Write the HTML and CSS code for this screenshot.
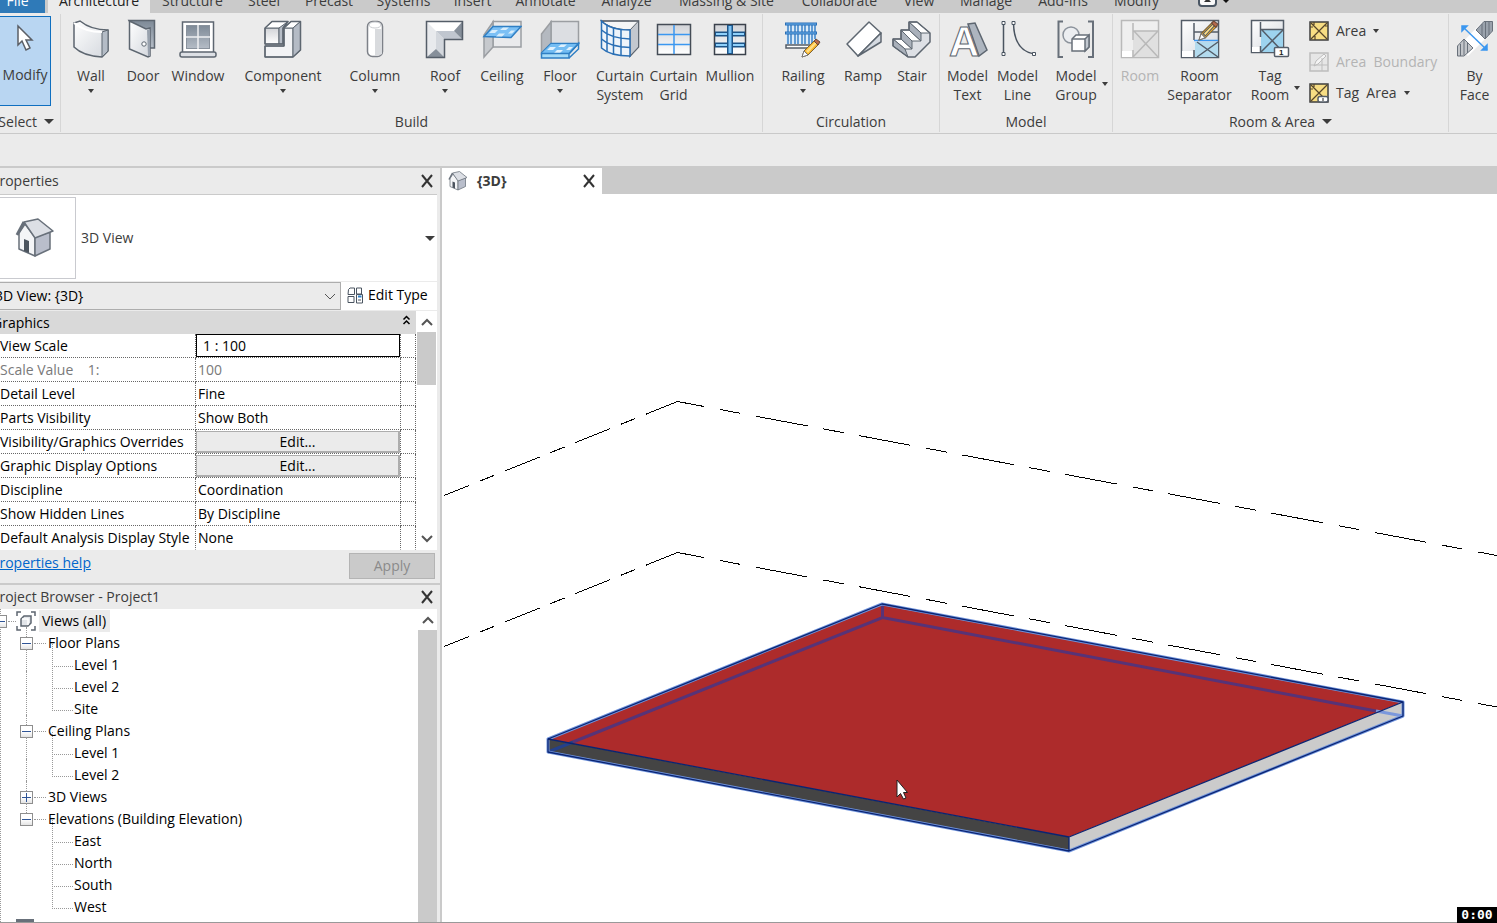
FILE: index.html
```
<!DOCTYPE html>
<html lang="en">
<head>
  <meta charset="UTF-8">
  <meta name="viewport" content="width=device-width, initial-scale=1.0">
  <title>Project1 - 3D View: {3D}</title>
  <link rel="stylesheet" href="styles.css">
</head>
<body>

<!-- gradients and symbols shared by the icons -->
<svg class="defs" width="0" height="0" aria-hidden="true">
  <defs>
    <linearGradient id="metal" x1="0" y1="0" x2="1" y2="1">
      <stop offset="0" stop-color="#ffffff"/>
      <stop offset="1" stop-color="#d3d7dd"/>
    </linearGradient>
    <linearGradient id="face" x1="0" y1="0" x2="0" y2="1">
      <stop offset="0" stop-color="#d2d4d8"/>
      <stop offset="1" stop-color="#ffffff"/>
    </linearGradient>
    <linearGradient id="glass" x1="0" y1="0" x2="0" y2="1">
      <stop offset="0" stop-color="#7e8a97"/>
      <stop offset="1" stop-color="#b4bcc6"/>
    </linearGradient>
    <symbol id="house" viewBox="0 0 40 40">
      <g stroke="#68707a" stroke-width="1.500" stroke-linejoin="round">
        <path d="M4 15 10 6 20 19V38L4 31Z" fill="#f4f5f7"/>
        <path d="M20 19 35 14V31L20 38Z" fill="#b9becb"/>
        <path d="M9 4 23 1 38 13 20 20Z" fill="#dcdfe5"/>
        <path d="M2 17 9 4" stroke-width="3"/>
      </g>
      <path d="M9 21 14 23V35L9 33Z" fill="#4c545e"/>
    </symbol>
    <symbol id="pencil" viewBox="0 0 20 20">
      <path d="M1 19 3 13 14 2 18 6 7 17Z" fill="#f7b32b" stroke="#7b6238"/>
      <path d="M5 13 15 3 17 4 7 15Z" fill="#ffdf85"/>
      <path d="M13 3 15 1 19 4 17 7Z" fill="#b86a4b" stroke="#6a4a3c"/>
      <path d="M1 19 3 13 7 17Z" fill="#fff" stroke="#777"/>
    </symbol>
  </defs>
</svg>

<nav class="tabs">
  <a class="tab file" href="#">File</a>
  <a class="tab active" href="#">Architecture</a>
  <a class="tab" href="#">Structure</a>
  <a class="tab" href="#">Steel</a>
  <a class="tab" href="#">Precast</a>
  <a class="tab" href="#">Systems</a>
  <a class="tab" href="#">Insert</a>
  <a class="tab" href="#">Annotate</a>
  <a class="tab" href="#">Analyze</a>
  <a class="tab" href="#">Massing &amp; Site</a>
  <a class="tab" href="#">Collaborate</a>
  <a class="tab" href="#">View</a>
  <a class="tab" href="#">Manage</a>
  <a class="tab" href="#">Add-Ins</a>
  <a class="tab" href="#">Modify</a>
  <button class="minimize" aria-label="Minimize ribbon">
    <svg width="34" height="14" viewBox="0 0 34 14"><rect x="2" y="-6" width="17" height="13" rx="3" fill="#fafafa" stroke="#4a5663" stroke-width="2"/><path d="M7 3H14L10.500-1Z" fill="#333"/><path d="M25 0H33L29 4Z" fill="#111"/></svg>
  </button>
</nav>

<header class="ribbon">
  <section class="panel select">
    <div class="tools">
      <button class="tool pressed">
        <svg viewBox="0 0 40 40"><path d="M13 8V27L17 23 21 32 25 30 21 22H27Z" fill="#fff" stroke="#5b5f66" stroke-width="1.500"/></svg>
        <span>Modify</span>
      </button>
    </div>
    <h2>Select <i class="caret big"></i></h2>
  </section>

  <section class="panel build">
    <div class="tools">
      <button class="tool">
        <svg viewBox="0 0 40 40"><path d="M3 4 9 2Q20 11 37 11V32L31 38Q12 37 3 28Z" fill="url(#metal)" stroke="#5d6670" stroke-width="1.500"/><path d="M31 13 37 11V32L31 38Z" fill="#b4bcc6" stroke="#5d6670"/><path d="M3 4Q14 13 31 13" fill="none" stroke="#fff" stroke-width="2"/></svg>
        <span>Wall</span><i class="caret"></i>
      </button>
      <button class="tool">
        <svg viewBox="0 0 40 40"><path d="M6 1.500H31.500V29H24Z" fill="url(#glass)" stroke="#5d6670" stroke-width="1.500"/><path d="M6.500 2 23 10 27 9V37L25 38 6.500 30Z" fill="url(#metal)" stroke="#5d6670" stroke-width="1.500"/><path d="M24 11 27 10V37L25 37Z" fill="#98a1ad"/><circle cx="21" cy="25" r="2.200" fill="#fff" stroke="#5d6670"/></svg>
        <span>Door</span>
      </button>
      <button class="tool">
        <svg viewBox="0 0 40 40"><rect x="4.500" y="3" width="31" height="31" fill="#fff" stroke="#5d6670" stroke-width="1.500"/><rect x="8.500" y="6.500" width="23" height="23" fill="url(#glass)" stroke="#89929d"/><path d="M20 6V30M8 18H32" stroke="#eef0f2" stroke-width="1.500"/><rect x="2" y="33" width="36" height="5" rx="2" fill="#dde0e5" stroke="#5d6670" stroke-width="1.500"/></svg>
        <span>Window</span>
      </button>
      <button class="tool">
        <svg viewBox="0 0 40 40" stroke="#5d6670" stroke-linejoin="round"><path d="M2 27H21V9H30V38H2Z" fill="#f2f3f5"/><path d="M21 9 28 2.500H37.500L30 9Z" fill="#fff"/><path d="M30 9 37.500 2.500V31L30 38Z" fill="#b4bbc5"/><path d="M2 9H16V25H2Z" fill="url(#face)"/><path d="M2 9 9 2.500H25L18 9Z" fill="#fff"/><path d="M16 9 25 2.500 20 9V25H16Z" fill="#b6bdc7"/><path d="M2 9 9 2.500H25L20 9V25H2ZM21 9 28 2.500H37.500V31L30 38H2V27H21Z" fill="none" stroke-width="1.500"/></svg>
        <span>Component</span><i class="caret"></i>
      </button>
      <button class="tool">
        <svg viewBox="0 0 40 40"><rect x="12.500" y="2.500" width="15" height="35" rx="5" fill="#fff" stroke="#7d8188" stroke-width="1.500"/><path d="M20 10H27V35Q24 37 20 37Z" fill="#d9dbde"/><ellipse cx="20" cy="6" rx="6" ry="3" fill="#fff" stroke="#c9ccd0"/></svg>
        <span>Column</span><i class="caret"></i>
      </button>
      <button class="tool">
        <svg viewBox="0 0 40 40"><path d="M2 3 11 12V30L2 38Z" fill="#e8eaed"/><path d="M2 3H37L29 12H11Z" fill="#fff"/><path d="M11 12H29L37 20H19Z" fill="#c0c6cf"/><path d="M11 12 19 20V38L11 30Z" fill="#d3d7dd"/><path d="M2 38 11 30 19 38Z" fill="#868f9a"/><path d="M37 3 29 12 37 20Z" fill="#868f9a"/><path d="M1.500 2.500H37.500V20.500H19.500V38.500H1.500Z" fill="none" stroke="#545d68" stroke-width="1.500"/></svg>
        <span>Roof</span><i class="caret"></i>
      </button>
      <button class="tool">
        <svg viewBox="0 0 40 40"><path d="M11 2.500H39V28H11Z" fill="#e9eaec" stroke="#9b9ea2" stroke-width="1.500"/><path d="M2 16 11 3V28L2 38Z" fill="#c6c9cd" stroke="#9b9ea2" stroke-width="1.500"/><path d="M2 17.500 11 7.500H39L29 18.500Z" fill="#7cc0f5" stroke="#2f7fc4" stroke-width="1.500"/><path d="M10 11H16L13 14H7ZM21 8.500H27L24 11H18ZM17 14.500H23L20 17.500H14ZM29 11.500H33L30 14.500H26Z" fill="#d8edfc"/></svg>
        <span>Ceiling</span>
      </button>
      <button class="tool">
        <svg viewBox="0 0 40 40"><path d="M11 2.500H38.500V25H11Z" fill="#dcdee2" stroke="#9b9ea2" stroke-width="1.500"/><path d="M1.500 15 11 3V25L1.500 34Z" fill="#b4b9c0" stroke="#9b9ea2" stroke-width="1.500"/><path d="M1.500 34 11 24.500H38.500L29 35V39H1.500Z" fill="#a6dbf8" stroke="#2f7fc4" stroke-width="1.500"/><path d="M2 34 11 25H38L29 34.500Z" fill="#74bdf3"/><path d="M10 28H16L13 31H7ZM21 25.500H27L24 28H18ZM17 31H23L20 34H14ZM29 28H33L30 31H26Z" fill="#e0f1fd"/><path d="M1.500 34.500H29L38.500 24.500V30L29 39" fill="none" stroke="#2f7fc4" stroke-width="1.500"/></svg>
        <span>Floor</span><i class="caret"></i>
      </button>
      <button class="tool">
        <svg viewBox="0 0 40 40"><path d="M1.500 2H38.500V28L30 37V11Q10 11 1.500 2Z" fill="#f4f5f6" stroke="#4a525c" stroke-width="1.500"/><path d="M30 11 38.500 2V28L30 37Z" fill="#c3c8cf" stroke="#5d6670"/><path d="M1.500 2Q10 11 30 11V37Q10 37 1.500 29Z" fill="#eef4fa" stroke="#2a6fb5" stroke-width="1.500"/><path d="M1.500 11Q10 19 30 20M1.500 20Q10 28 30 28.500M7 6V33M13.500 9V36M21 10.500V37" fill="none" stroke="#2a6fb5" stroke-width="1.500"/></svg>
        <span>Curtain<br>System</span>
      </button>
      <button class="tool">
        <svg viewBox="0 0 40 40"><rect x="3.500" y="5.500" width="33" height="30" fill="url(#face)" stroke="#454c56" stroke-width="1.500"/><path d="M4 15.500H36M4 25.500H36M20 6V35" stroke="#3b97f0" stroke-width="1.500"/></svg>
        <span>Curtain<br>Grid</span>
      </button>
      <button class="tool">
        <svg viewBox="0 0 40 40"><rect x="4.500" y="5.500" width="31" height="30" fill="url(#face)" stroke="#3a414b" stroke-width="1.500"/><path d="M5 15H35M5 26H35" stroke="#1c5488" stroke-width="5"/><path d="M6 15H34M6 26H34" stroke="#8fd0fa" stroke-width="2"/><path d="M20 6V35" stroke="#1c5488" stroke-width="6"/><path d="M20 7V34" stroke="#7cc4f7" stroke-width="3"/></svg>
        <span>Mullion</span>
      </button>
    </div>
    <h2>Build</h2>
  </section>

  <section class="panel circulation">
    <div class="tools">
      <button class="tool">
        <svg viewBox="0 0 40 40"><path d="M3 5H33V25H3Z" fill="#dcebf8"/><path d="M5 6V25M8 6V25M12 6V25M15 6V25M19 6V25M22 6V25M26 6V25M29 6V25M32 6V20" stroke="#3a82c8" stroke-width="1.500"/><path d="M2 5H34M2 14H34" stroke="#2a6fb5" stroke-width="3"/><path d="M3 5H33M3 14H33" stroke="#6bb1ee" stroke-width="1"/><path d="M3 26H30V29H3Z" fill="#fff" stroke="#545d68" stroke-width="1.500"/><use href="#pencil" x="18" y="19" width="20" height="20"/></svg>
        <span>Railing</span><i class="caret"></i>
      </button>
      <button class="tool">
        <svg viewBox="0 0 40 40" stroke="#5d6670" stroke-width="1.500" stroke-linejoin="round"><path d="M4 25 26 3 38 14 15 37Z" fill="#fff"/><path d="M38 14V23L15 37Z" fill="#d5dae1"/></svg>
        <span>Ramp</span>
      </button>
      <button class="tool">
        <svg viewBox="0 0 40 40" stroke="#5d6670" stroke-linejoin="round"><path d="M29 14H38V23L23 38H16L13 30H20V22H29Z" fill="#dde0e5" stroke="none"/><path d="M17 3H25L38 14H29ZM9 11H17L29 22H20ZM1 20H9L20 30H13Z" fill="#fff"/><path d="M17 3 29 14V22L17 11ZM9 11 20 22V30L9 20ZM1 20 13 30 16 38 1 27Z" fill="#aab1bb"/><path d="M17 3H25L38 14V23L23 38H16L1 27V20H9V11H17Z" fill="none" stroke-width="1.500"/></svg>
        <span>Stair</span>
      </button>
    </div>
    <h2>Circulation</h2>
  </section>

  <section class="panel model">
    <div class="tools">
      <button class="tool">
        <svg viewBox="0 0 40 40"><path d="M20 5 27 4 39 31 31 37Z" fill="#adb5bf" stroke="#5d6670" stroke-width="1.500"/><text class="solid" x="1" y="37">A</text></svg>
        <span>Model<br>Text</span>
      </button>
      <button class="tool">
        <svg viewBox="0 0 40 40" fill="none" stroke="#4a5460"><path d="M5.500 4V35M15.500 4Q16 32 36.500 35" stroke-width="1.500"/><path d="M4 2.500H7V5.500H4ZM4 33.500H7V36.500H4ZM14 2.500H17V5.500H14ZM34.500 33.500H37.500V36.500H34.500Z" fill="#fff"/></svg>
        <span>Model<br>Line</span>
      </button>
      <button class="tool side">
        <svg viewBox="0 0 40 40" stroke="#68707a" stroke-width="1.500"><path d="M7 2.500H2.500V38H7M32 2.500H37V38H32" fill="none" stroke-width="2"/><circle cx="15" cy="16" r="8" fill="#eceef1" stroke="#8c939c"/><path d="M16 20 20 16H33V28L29 32H16Z" fill="#fff"/><path d="M29 20 33 16V28L29 32Z" fill="#c3c9d1"/><path d="M16 20H29"/></svg>
        <span>Model<br>Group</span><i class="caret"></i>
      </button>
    </div>
    <h2>Model</h2>
  </section>

  <section class="panel room">
    <div class="tools">
      <button class="tool" disabled>
        <svg viewBox="0 0 40 40" stroke="#b9b9b9" fill="none"><rect x="1.500" y="1.500" width="37" height="37" fill="#efefef" stroke-width="1.500"/><path d="M13 12H38V38H13Z" fill="#e0e0e0" stroke="none"/><path d="M2 32H12V38H2Z" fill="#fff" stroke="none"/><path d="M13 4V21M13 12H38M13 31V38M14 12 38 38M38 12 13 38" stroke-width="1.500"/></svg>
        <span>Room</span>
      </button>
      <button class="tool">
        <svg viewBox="0 0 40 40" stroke="#545d68" fill="none"><rect x="1.500" y="1.500" width="37" height="37" fill="url(#metal)" stroke-width="1.500"/><path d="M15 23H38V38H15Z" fill="#b3dbee" stroke="none"/><path d="M2 32H13V38H2Z" fill="#fff" stroke="none"/><path d="M14 4V21M14 13H38M14 31V38M17 38 38 23M17 23 38 38" stroke-width="1.500"/><path d="M14 21.500H38" stroke="#3b97f0" stroke-width="1.500"/><use href="#pencil" x="18" y="1" width="21" height="21"/></svg>
        <span>Room<br>Separator</span>
      </button>
      <button class="tool side tag-room">
        <svg viewBox="0 0 40 40" stroke="#545d68" fill="none"><rect x="1.500" y="1.500" width="32" height="32" fill="url(#metal)" stroke-width="1.500"/><path d="M11 11H33V33H11Z" fill="#9dd3ee" stroke="none"/><path d="M2 28H10V33H2Z" fill="#fff" stroke="none"/><path d="M10.500 3V18M10.500 10.500H33M10.500 27V33M12 11 33 33M33 11 11 33" stroke-width="1.500"/><rect x="24.500" y="28.500" width="14" height="9" rx="1" fill="#fff" stroke-width="1.500"/><text class="tag" x="29" y="36">1</text></svg>
        <span>Tag<br>Room</span><i class="caret"></i>
      </button>
      <div class="stack">
        <button class="row">
          <svg viewBox="0 0 20 20" stroke="#57462a"><rect x="1" y="1" width="18" height="18" fill="#f7dd83" stroke="#3e3e3e" stroke-width="1.500"/><path d="M2 2 18 18M18 2 2 18M5 1V4M1 6H4M16 5H19M6 19V15" fill="none" stroke-width="1.200"/></svg>
          <span>Area</span><i class="caret"></i>
        </button>
        <button class="row" disabled>
          <svg viewBox="0 0 20 20" stroke="#bdbdbd"><rect x="1" y="1" width="18" height="18" fill="#e6e6e6" stroke-width="1.500"/><path d="M1 13H19M13 6V19M5 14 7 9 15 2 17 4 9 12Z" fill="#f4f4f4"/></svg>
          <span>Area&nbsp; Boundary</span>
        </button>
        <button class="row">
          <svg viewBox="0 0 20 20" stroke="#57462a"><rect x="1" y="1" width="18" height="18" fill="#f7dd83" stroke="#3e3e3e" stroke-width="1.500"/><path d="M2 2 18 18M18 2 2 18M5 1V4M1 6H4" fill="none" stroke-width="1.200"/><rect x="9" y="13.500" width="10" height="5.500" rx="2" fill="#fff" stroke="#545d68" stroke-width="1.500"/><path d="M14 15V18" stroke="#222"/></svg>
          <span>Tag&nbsp; Area</span><i class="caret"></i>
        </button>
      </div>
    </div>
    <h2>Room &amp; Area <i class="caret big"></i></h2>
  </section>

  <section class="panel face">
    <div class="tools">
      <button class="tool">
        <svg viewBox="0 0 40 40" stroke="#68707a"><path d="M3 28 27 3 37 13 13 37Z" fill="#fff" stroke="none"/><path d="M2.500 37V27L9 20 18 29 9 37Z" fill="#c3c6ca"/><path d="M21 11 29 2.500H37.500V12L30 20Z" fill="#9aa2ac"/><path d="M5.500 25V37M9 21V36M12.500 24V34M27 5V17M30.500 3V19M34 3V16"/><path d="M8 8 32 31" stroke="#3b97f0" stroke-width="1.500"/><path d="M7 7H12L7 12ZM32 26V31H27Z" fill="#3b97f0" stroke="#3b97f0" stroke-width="1.500"/></svg>
        <span>By<br>Face</span>
      </button>
    </div>
  </section>
</header>

<div class="options-bar"></div>

<main class="workspace">
  <aside class="dock">
    <section class="properties">
      <div class="title">
        <h3>Properties</h3>
        <button class="close" aria-label="Close Properties"><svg width="14" height="14" viewBox="0 0 14 14"><path d="M2 1 12 13M12 1 2 13"/></svg></button>
      </div>
      <div class="type-selector">
        <div class="thumb"><svg width="40" height="40"><use href="#house"/></svg></div>
        <span>3D View</span>
        <i class="caret big"></i>
      </div>
      <div class="instance">
        <div class="combo">
          <select aria-label="Instance"><option>3D View: {3D}</option></select>
          <svg width="12" height="8" viewBox="0 0 12 8"><path d="M1 1 6 6 11 1" fill="none" stroke="#555"/></svg>
        </div>
        <button class="edit-type">
          <svg width="17" height="17" viewBox="0 0 17 17" fill="#fff" stroke="#4a5460"><path d="M1.500 2.500 3 1H7.500V7.500H1ZM9.500 1H14.500V7H9.500ZM1 9.500H7V15.500H1Z"/><path d="M9.500 7.500H15.500V16H9.500Z"/><path d="M11 9.500H14.500" stroke="#2f7fc4" stroke-width="2"/><path d="M11 13H14"/></svg>
          Edit Type
        </button>
      </div>
      <div class="grid-wrap">
        <div class="grid">
          <div class="group">Graphics <svg width="9" height="10" viewBox="0 0 9 10"><path d="M1.500 4.500 4.500 1.500 7.500 4.500M1.500 9 4.500 6 7.500 9" fill="none" stroke="#000" stroke-width="1.500"/></svg></div>
          <table>
            <tr><th><label for="scale">View Scale</label></th><td class="field"><input id="scale" type="text" value="1 : 100"></td><td></td></tr>
            <tr class="muted"><th>Scale Value &nbsp;&nbsp; 1:</th><td>100</td><td></td></tr>
            <tr><th>Detail Level</th><td>Fine</td><td></td></tr>
            <tr><th>Parts Visibility</th><td>Show Both</td><td></td></tr>
            <tr><th>Visibility/Graphics Overrides</th><td class="field"><button>Edit...</button></td><td></td></tr>
            <tr><th>Graphic Display Options</th><td class="field"><button>Edit...</button></td><td></td></tr>
            <tr><th>Discipline</th><td>Coordination</td><td></td></tr>
            <tr><th>Show Hidden Lines</th><td>By Discipline</td><td></td></tr>
            <tr><th>Default Analysis Display Style</th><td>None</td><td></td></tr>
          </table>
        </div>
        <div class="scrollbar">
          <svg width="12" height="8" viewBox="0 0 12 8"><path d="M1 7 6 2 11 7"/></svg>
          <div class="slider short"></div>
          <svg width="12" height="8" viewBox="0 0 12 8"><path d="M1 1 6 6 11 1"/></svg>
        </div>
      </div>
      <div class="help">
        <a href="#">Properties help</a>
        <button disabled>Apply</button>
      </div>
    </section>

    <section class="browser">
      <div class="title">
        <h3>Project Browser - Project1</h3>
        <button class="close" aria-label="Close Project Browser"><svg width="14" height="14" viewBox="0 0 14 14"><path d="M2 1 12 13M12 1 2 13"/></svg></button>
      </div>
      <div class="tree-wrap">
        <ul class="tree">
          <li class="root"><i class="box"></i><i class="dots"></i>
            <svg width="20" height="20" viewBox="0 0 20 20" fill="none" stroke="#5d6670" stroke-width="1.500"><path d="M1 5V1H5M15 1H19V5M19 15V19H15M5 19H1V15"/><path d="M5 8 8 5H15V12L12 15H5Z" fill="#e3e6ea"/><path d="M6 8H12V14" stroke="#fff"/></svg>
            <span>Views (all)</span></li>
          <li class="node"><i class="box"></i><i class="dots"></i>Floor Plans</li>
          <li class="leaf">Level 1</li>
          <li class="leaf">Level 2</li>
          <li class="leaf last">Site</li>
          <li class="node"><i class="box"></i><i class="dots"></i>Ceiling Plans</li>
          <li class="leaf">Level 1</li>
          <li class="leaf last">Level 2</li>
          <li class="node"><i class="box plus"></i><i class="dots"></i>3D Views</li>
          <li class="node end"><i class="box"></i><i class="dots"></i>Elevations (Building Elevation)</li>
          <li class="leaf">East</li>
          <li class="leaf">North</li>
          <li class="leaf">South</li>
          <li class="leaf last">West</li>
          <li class="cut"><svg width="18" height="10"><path d="M0 1H18V10H0Z" fill="#68707a"/></svg></li>
        </ul>
        <div class="scrollbar">
          <svg width="12" height="8" viewBox="0 0 12 8"><path d="M1 7 6 2 11 7"/></svg>
          <div class="slider"></div>
        </div>
      </div>
    </section>
  </aside>

  <section class="view">
    <div class="view-tabs">
      <div class="view-tab">
        <svg width="20" height="20"><use href="#house"/></svg>
        <b>{3D}</b>
        <button class="close" aria-label="Close view"><svg width="14" height="14" viewBox="0 0 14 14"><path d="M2 1 12 13M12 1 2 13"/></svg></button>
      </div>
    </div>
    <svg class="canvas" viewBox="442 194 1055 728" preserveAspectRatio="xMinYMin slice">
      <!-- level lines -->
      <g fill="none" stroke="#000" shape-rendering="crispEdges">
        <g stroke-dasharray="37.500 11.500 15.500 11.500" stroke-dashoffset="10.500">
          <path d="M444 495.500 677.500 401.500"/>
          <path d="M444 646.500 677.500 552.500"/>
        </g>
        <g stroke-dasharray="52.300 16 20.800 15.800" stroke-dashoffset="25">
          <path d="M677.500 401.500 1497 555.500"/>
          <path d="M677.500 552.500 1497 707"/>
        </g>
      </g>
      <!-- floor slab -->
      <path d="M548 739 882 604 1403 702 1069 837Z" fill="#ad2b2b"/>
      <path d="M548 739 1069 837V851L548 752Z" fill="#444"/>
      <path d="M1069 837 1403 702V716L1069 851Z" fill="#cbcbcb"/>
      <g fill="none" stroke-width="3">
        <path d="M573 742 882.500 617.500 1376 711M882.500 604V617" stroke="#573377"/>
        <path d="M548 752 573 742" stroke="#24408a"/>
        <path d="M1376 711 1403 716" stroke="#7b98dc"/>
      </g>
      <g fill="none" stroke-linejoin="round">
        <path d="M548 739 882 604 1403 702V716L1069 851 548 752Z" stroke="#6f93dc" stroke-width="3"/>
        <path d="M548 739 882 604 1403 702V716L1069 851 548 752ZM548 739 1069 837 1403 702M1069 837V851" stroke="#0a2472" stroke-width="1.300"/>
      </g>
      <path d="M897 780V797L900.500 793.500 903.500 799 906 798 903.500 792.500H907.500Z" fill="#fff" stroke="#222"/>
    </svg>
    <time class="timer">0:00</time>
  </section>
</main>

</body>
</html>
```

FILE: styles.css
```
* { box-sizing: border-box; }
body { margin: 0; height: 100vh; display: flex; flex-direction: column; overflow: hidden; background: #ebebeb; color: #3c3c3c; font-family: "Open Sans", "Noto Sans", sans-serif; font-size: 14px; line-height: 20px; }
button, input, select { font: inherit; color: inherit; }
button { border: 0; padding: 0; background: none; }
h2, h3 { margin: 0; font-size: 14px; font-weight: normal; }
ul { margin: 0; padding: 0; list-style: none; }
.defs { position: absolute; }

.caret { border: 3px solid transparent; border-top: 4px solid #3c3c3c; border-bottom: 0; }
.caret.big { display: inline-block; border-width: 5px 5px 0; }

/* ribbon tabs, scrolled half out of the window */
.tabs { flex: none; height: 24px; margin-top: -11px; display: grid; grid-template-columns: 45px 102px 85px 58px 72px 77px 61px 85px 77px 123px 103px 56px 78px 76px 71px auto; background: #cacaca; }
.tab { height: 24px; color: #3c3c3c; text-align: center; text-decoration: none; white-space: nowrap; line-height: 24px; }
.tab.file { background: #2f7ab8; color: #fff; padding-right: 10px; }
.tab.active { background: #ebebeb; color: #222; }
.tab:nth-child(n+2) { margin-left: 3px; margin-right: -3px; }
.minimize { height: 24px; padding: 10px 0 0 28px; text-align: left; }
.minimize svg { display: block; overflow: visible; }

/* ribbon panels */
.ribbon { flex: none; display: flex; height: 121px; border-bottom: 1px solid #c9c9c9; }
.panel { flex: none; display: flex; flex-direction: column; margin: 1px 0; border-right: 1px solid #d6d6d6; }
.panel h2 { flex: 1; display: flex; justify-content: center; align-items: center; gap: 7px; padding-top: 3px; }
.panel.select { width: 61px; }
.panel.select h2 { justify-content: flex-end; padding-right: 6px; }
.panel.build { width: 702px; }
.panel.circulation { width: 177px; }
.panel.model { width: 173px; }
.panel.room { width: 336px; }
.panel.face { flex: 1; border-right: 0; }
.tools { height: 94px; padding-top: 2px; display: grid; }
.select .tools { grid-template-columns: 51px; }
.build .tools { padding-left: 4px; grid-template-columns: 52px 52px 58px 112px 72px 68px 46px 70px 50px 57px 56px; }
.circulation .tools { padding-left: 10px; grid-template-columns: 60px 60px 38px; }
.model .tools { padding-left: 2px; grid-template-columns: 51px 49px 68px; }
.room .tools { padding-left: 1px; grid-template-columns: 52px 67px 74px 1fr; }
.face .tools { padding-left: 3px; }
.tool { display: flex; flex-direction: column; align-items: center; padding-top: 3px; white-space: nowrap; line-height: 19px; }
.tool svg { flex: none; width: 40px; height: 40px; margin-bottom: 7px; }
.tool .caret { margin-top: 4px; }
.tool.pressed { height: 90px; border: 1px solid #0f6fc0; border-left: 0; background: #b9d6f2; padding-top: 1px; }
.tool.side { position: relative; }
.tool.side .caret { position: absolute; right: 2px; top: 62px; }
.tool.tag-room .caret { right: 7px; top: 66px; }
.tool:disabled, .row:disabled { color: #b4b4b4; }
.solid { font: bold 42px "Liberation Sans", sans-serif; fill: #fff; stroke: #5d6670; stroke-width: 1px; }
.tag { font: bold 8px "Liberation Sans", sans-serif; fill: #222; stroke: none; }
.stack { padding: 1px 0 0 2px; display: flex; flex-direction: column; gap: 3px; }
.row { height: 28px; display: flex; align-items: center; gap: 7px; white-space: nowrap; }
.row svg { width: 20px; height: 20px; }

.options-bar { flex: none; height: 34px; border-bottom: 2px solid #cacaca; }

/* docked palettes, slightly off the left edge */
.workspace { flex: 1; min-height: 0; display: flex; border-bottom: 1px solid #999; }
.dock { flex: none; width: 451px; margin-left: -9px; padding-right: 3px; border-right: 2px solid #cacaca; display: flex; flex-direction: column; }
.title { height: 26px; display: flex; justify-content: space-between; align-items: center; padding-right: 3px; }
.close svg { display: block; fill: none; stroke: #333; stroke-width: 2px; }
.type-selector { height: 88px; display: flex; align-items: center; border-top: 1px solid #cacaca; border-bottom: 1px solid #ebebeb; background: #fff; }
.thumb { width: 85px; height: 82px; display: flex; align-items: center; justify-content: flex-end; padding-right: 20px; border: 1px solid #c9cacf; margin-right: 5px; }
.type-selector .caret { margin: 0 2px 0 auto; }
.instance { height: 29px; display: flex; background: #fff; border-bottom: 1px solid #ebebeb; color: #000; }
.combo { position: relative; width: 350px; }
.combo select { width: 100%; height: 28px; padding: 0 0 0 3px; border: 1px solid #adadad; border-radius: 0; background: #ebebeb; appearance: none; }
.combo svg { position: absolute; right: 5px; top: 11px; pointer-events: none; }
.edit-type { display: flex; align-items: center; gap: 4px; padding: 0 0 2px 6px; white-space: nowrap; }
.grid-wrap { display: flex; height: 239px; background: #fff; color: #000; }
.grid { width: 425px; overflow: hidden; }
.group { height: 23px; display: flex; justify-content: space-between; padding: 2px 5px 0 1px; background: #d9d9d9; }
.group svg { margin-top: 2px; }
table { width: 425px; table-layout: fixed; border-collapse: separate; border-spacing: 0; }
th, td { height: 24px; padding: 0 0 0 2px; border-right: 1px dotted #666; border-bottom: 1px dotted #666; text-align: left; font-weight: normal; line-height: 20px; white-space: nowrap; }
th { width: 205px; padding-left: 9px; }
td:last-child { width: 15px; padding: 0; }
tr:last-child > * { border-bottom-color: transparent; }
.muted { color: #7a7a7a; }
.field { padding: 0; }
td input { display: block; width: 100%; height: 23px; padding: 0 6px; border: 1px solid #000; background: #fff; }
td button { display: block; width: 100%; height: 22px; margin-top: 1px; border: 1px solid #adadad; border-width: 1px 2px 2px 1px; background: #ebebeb; }
.scrollbar { width: 21px; display: flex; flex-direction: column; align-items: center; padding: 7px 0; }
.scrollbar svg { flex: none; fill: none; stroke: #555; stroke-width: 2px; }
.slider { flex: 1; width: 19px; margin-top: 6px; background: #cacaca; }
.slider.short { flex: none; height: 53px; margin-bottom: auto; }
.help { height: 35px; display: flex; justify-content: space-between; align-items: flex-start; margin-right: -3px; padding: 3px 5px 0 0; border-bottom: 2px solid #cacaca; }
.help a { color: #0066cc; }
.help button { width: 86px; height: 26px; border: 1px solid #b4b4b4; background: #cacaca; color: #8a8a8a; }
.browser { flex: 1; min-height: 0; display: flex; flex-direction: column; }
.browser .title { height: 24px; }

/* project tree */
.tree-wrap { flex: 1; min-height: 0; overflow: hidden; display: flex; justify-content: space-between; background: #fff; color: #000; }
.tree-wrap .scrollbar { width: 19px; padding-bottom: 0; }
.tree { margin-left: 9px; padding-top: 1px; border-left: 1px dotted #999; }
.tree li { position: relative; height: 22px; margin-left: -1px; display: flex; align-items: center; white-space: nowrap; }
.tree .root { margin-left: -7px; }
.root svg { margin: 0 3px 0 0; }
.root span { padding: 0 4px 0 3px; background: #ebebeb; line-height: 22px; }
.node { padding-left: 20px; }
.node::before { content: ""; position: absolute; left: 26px; top: -5px; height: 10px; border-left: 1px dotted #999; }
.leaf { padding-left: 74px; }
.leaf::before { content: ""; position: absolute; left: 26px; top: -5px; height: 22px; border-left: 1px dotted #999; }
.leaf::after { content: ""; position: absolute; left: 52px; top: -10px; width: 20px; height: 22px; border: 1px dotted #999; border-width: 0 0 1px 1px; }
.end ~ .leaf::before { display: none; }
.cut { padding-left: 16px; }
.tree .cut { height: 10px; align-items: flex-start; }
.box { position: relative; width: 13px; height: 13px; border: 1px solid #8e8e8e; background: linear-gradient(#fff 50%, #e4e4e4); display: flex; align-items: center; justify-content: center; }
.box::before { content: ""; width: 9px; height: 1px; background: #2f5597; }
.plus::after { content: ""; position: absolute; width: 1px; height: 9px; background: #2f5597; }
.dots { width: 12px; margin: 0 2px 0 1px; border-top: 1px dotted #999; }
.root .dots { width: 8px; margin-right: 0; }

/* drawing area */
.view { position: relative; flex: 1; min-width: 0; display: flex; flex-direction: column; background: #fff; }
.view-tabs { height: 26px; background: #cacaca; }
.view-tab { width: 160px; height: 26px; display: flex; align-items: center; padding: 0 6px; background: #fff; }
.view-tab b { margin: 0 auto 0 9px; }
.canvas { flex: 1; min-height: 0; width: 100%; display: block; }
.timer { position: absolute; right: 0; bottom: -1px; width: 40px; height: 16px; background: #000; color: #fff; font: bold 13px/16px "DejaVu Sans Mono", monospace; text-align: center; }
```
